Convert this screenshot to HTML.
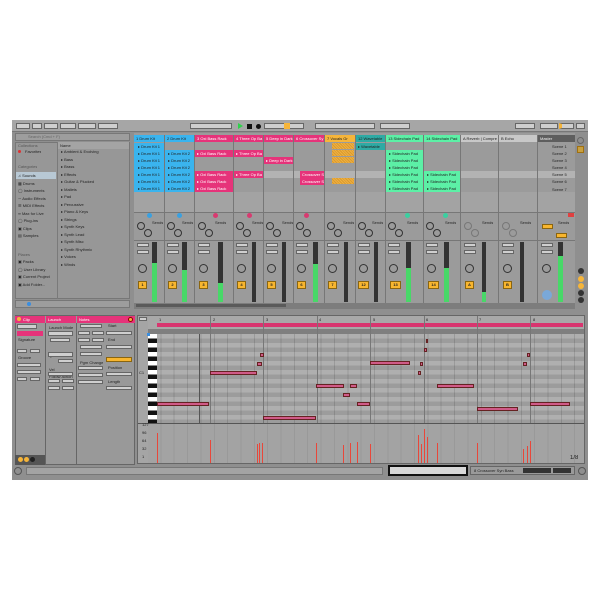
<!DOCTYPE html><html><head><meta charset="utf-8"><style>
*{margin:0;padding:0;box-sizing:border-box}
body{width:600px;height:600px;background:#fff;position:relative;overflow:hidden;font-family:"Liberation Sans",sans-serif;font-size:4px;color:#222}
div{position:absolute}
.t{white-space:nowrap;overflow:hidden;line-height:7px;font-size:4px;padding-left:2px}
.blue{background:#3ab4ee}.pink{background:#e6337a;color:#fff}.org{background:#f6b53a}.teal{background:#2eaaa4}.grn{background:#5cf0a6}
.hat{background:repeating-linear-gradient(45deg,#f0b040 0 1px,#d89a30 1px 2px)}
.y{background:#f8b62f;border:1px solid #8a6510;font-size:4px;text-align:center;line-height:6px;font-weight:bold}
.box{background:#cfcfcf;border:1px solid #666}
.k{border:1px solid #333;border-radius:50%}
</style></head><body>
<!-- app frame -->
<div style="left:12px;top:120px;width:576px;height:360px;background:#8f8f8f"></div>
<!-- top bar -->
<div style="left:12px;top:120px;width:576px;height:12px;background:#a6a6a6;border-bottom:1px solid #777"></div>
<div class="box" style="left:16px;top:123px;width:14px;height:6px"></div>
<div class="box" style="left:32px;top:123px;width:10px;height:6px"></div>
<div class="box" style="left:44px;top:123px;width:14px;height:6px"></div>
<div class="box" style="left:60px;top:123px;width:16px;height:6px"></div>
<div class="box" style="left:78px;top:123px;width:18px;height:6px"></div>
<div class="box" style="left:98px;top:123px;width:20px;height:6px"></div>
<div class="box" style="left:190px;top:123px;width:42px;height:6px"></div>
<div style="left:238px;top:123px;width:0;height:0;border-left:5px solid #2fd24a;border-top:3px solid transparent;border-bottom:3px solid transparent"></div>
<div style="left:247px;top:124px;width:5px;height:5px;background:#111"></div>
<div style="left:256px;top:124px;width:5px;height:5px;background:#111;border-radius:50%"></div>
<div class="box" style="left:264px;top:123px;width:40px;height:6px"></div>
<div style="left:284px;top:123px;width:6px;height:6px;background:#f6b53a"></div>
<div class="box" style="left:315px;top:123px;width:60px;height:6px"></div>
<div class="box" style="left:380px;top:123px;width:30px;height:6px"></div>
<div class="box" style="left:515px;top:123px;width:20px;height:6px"></div>
<div class="box" style="left:540px;top:123px;width:18px;height:6px"></div>
<div style="left:559px;top:123px;width:15px;height:6px;background:#cfcfcf;border:1px solid #666;border-left:3px solid #f6b53a"></div>
<div class="box" style="left:576px;top:123px;width:9px;height:6px"></div>

<!-- browser -->
<div style="left:15px;top:133px;width:115px;height:8px;background:#9d9d9d;border:1px solid #777"></div>
<div class="t" style="left:26px;top:133px;color:#666">Search (Cmd + F)</div>
<div style="left:15px;top:142px;width:115px;height:157px;background:#979797;border:1px solid #777"></div>
<div style="left:57px;top:142px;width:1px;height:157px;background:#7a7a7a"></div>
<div class="t" style="left:16px;top:142px;color:#555">Collections</div>
<div class="t" style="left:58px;top:142px;width:71px;background:#a4a4a4">Name</div>
<div style="left:18px;top:150px;width:3px;height:3px;border-radius:50%;background:#e03030"></div>
<div class="t" style="left:23px;top:148px">Favorites</div>
<div class="t" style="left:16px;top:163px;color:#555">Categories</div>
<div style="left:16px;top:172px;width:40px;height:7px;background:#b8c8d4"></div>
<div class="t" style="left:16px;top:172px;line-height:7.5px">&#9835; Sounds<br>&#9638; Drums<br>&#9711; Instruments<br>&#8764; Audio Effects<br>&#9776; MIDI Effects<br>&#8734; Max for Live<br>&#9711; Plug-ins<br>&#9635; Clips<br>&#9636; Samples</div>
<div class="t" style="left:16px;top:251px;color:#555">Places</div>
<div class="t" style="left:16px;top:258px;line-height:7.5px">&#9635; Packs<br>&#9711; User Library<br>&#9635; Current Project<br>&#9635; Add Folder...</div>
<div class="t" style="left:59px;top:148px;line-height:7.5px">&#9656; Ambient &amp; Evolving<br>&#9656; Bass<br>&#9656; Brass<br>&#9656; Effects<br>&#9656; Guitar &amp; Plucked<br>&#9656; Mallets<br>&#9656; Pad<br>&#9656; Percussive<br>&#9656; Piano &amp; Keys<br>&#9656; Strings<br>&#9656; Synth Keys<br>&#9656; Synth Lead<br>&#9656; Synth Misc<br>&#9656; Synth Rhythmic<br>&#9656; Voices<br>&#9656; Winds</div>
<div style="left:15px;top:300px;width:115px;height:8px;background:#9d9d9d;border:1px solid #777"></div>
<div style="left:27px;top:302px;width:4px;height:4px;background:#3a8ee0;border-radius:50%"></div>

<!-- session area background -->
<div style="left:134px;top:133px;width:441px;height:170px;background:#9b9b9b"></div>
<div style="left:134px;top:192px;width:441px;height:20px;background:#a3a3a3"></div>
<div style="left:134px;top:171px;width:441px;height:7px;background:#b3b3b3"></div>
<div style="left:134px;top:303px;width:441px;height:6px;background:#7d7d7d"></div>
<div style="left:136px;top:304px;width:150px;height:3px;background:#5a5a5a"></div>
<!-- column separators -->
<div style="left:164px;top:135px;width:1px;height:168px;background:#777"></div>
<div style="left:194px;top:135px;width:1px;height:168px;background:#777"></div>
<div style="left:233px;top:135px;width:1px;height:168px;background:#777"></div>
<div style="left:263px;top:135px;width:1px;height:168px;background:#777"></div>
<div style="left:293px;top:135px;width:1px;height:168px;background:#777"></div>
<div style="left:324px;top:135px;width:1px;height:168px;background:#777"></div>
<div style="left:355px;top:135px;width:1px;height:168px;background:#777"></div>
<div style="left:385px;top:135px;width:1px;height:168px;background:#777"></div>
<div style="left:423px;top:135px;width:1px;height:168px;background:#777"></div>
<div style="left:460px;top:135px;width:1px;height:168px;background:#777"></div>
<div style="left:498px;top:135px;width:1px;height:168px;background:#777"></div>
<div style="left:537px;top:135px;width:1px;height:168px;background:#777"></div>
<div style="left:134px;top:212px;width:441px;height:1px;background:#777"></div>
<div style="left:134px;top:240px;width:441px;height:1px;background:#777"></div>

<!-- track headers -->
<div class="t blue" style="left:134px;top:135px;width:30px">1 Drum Kit</div>
<div class="t blue" style="left:165px;top:135px;width:29px">2 Drum Kit</div>
<div class="t pink" style="left:195px;top:135px;width:38px">3 Oxi Bass Rack</div>
<div class="t pink" style="left:234px;top:135px;width:29px">4 Three Op Ba</div>
<div class="t pink" style="left:264px;top:135px;width:29px">5 Deep in Dark</div>
<div class="t pink" style="left:294px;top:135px;width:30px">6 Crossover Sy</div>
<div class="t org" style="left:325px;top:135px;width:30px">7 Vocals Gr</div>
<div class="t teal" style="left:356px;top:135px;width:29px">12 Wavetable</div>
<div class="t grn" style="left:386px;top:135px;width:37px">13 Sidechain Pad</div>
<div class="t grn" style="left:424px;top:135px;width:36px">14 Sidechain Pad</div>
<div class="t" style="left:461px;top:135px;width:37px;background:#c8c8c8">A Reverb | Compre</div>
<div class="t" style="left:499px;top:135px;width:38px;background:#c8c8c8">B Echo</div>
<div class="t" style="left:538px;top:135px;width:37px;background:#5e5e5e;color:#eee">Master</div>

<!-- clips: rows at y 143 + n*7.1 -->
<!-- track 1 -->
<div class="blue" style="left:134px;top:143px;width:30px;height:49px"></div>
<div class="t" style="left:136px;top:143px;line-height:7px">&#9656; Drum Kit 1<br>&#9656; Drum Kit 1<br>&#9656; Drum Kit 1<br>&#9656; Drum Kit 1<br>&#9656; Drum Kit 1<br>&#9656; Drum Kit 1<br>&#9656; Drum Kit 1</div>
<div class="blue" style="left:165px;top:150px;width:29px;height:42px"></div>
<div class="t" style="left:166px;top:150px;line-height:7px">&#9656; Drum Kit 2<br>&#9656; Drum Kit 2<br>&#9656; Drum Kit 2<br>&#9656; Drum Kit 2<br>&#9656; Drum Kit 2<br>&#9656; Drum Kit 2</div>
<div class="t pink" style="left:195px;top:150px;width:38px;height:7px">&#9656; Oxi Bass Rack</div>
<div class="t pink" style="left:195px;top:171px;width:38px;height:7px">&#9656; Oxi Bass Rack</div>
<div class="t pink" style="left:195px;top:178px;width:38px;height:7px">&#9656; Oxi Bass Rack</div>
<div class="t pink" style="left:195px;top:185px;width:38px;height:7px">&#9656; Oxi Bass Rack</div>
<div class="t pink" style="left:234px;top:150px;width:29px;height:7px">&#9656; Three Op Ba</div>
<div class="t pink" style="left:234px;top:171px;width:29px;height:7px">&#9656; Three Op Ba</div>
<div class="t pink" style="left:264px;top:157px;width:29px;height:7px">&#9656; Deep in Dark</div>
<div class="t pink" style="left:300px;top:171px;width:24px;height:7px">Crossover S</div>
<div class="t pink" style="left:300px;top:178px;width:24px;height:7px">Crossover S</div>
<div class="hat" style="left:332px;top:143px;width:22px;height:6px"></div>
<div class="hat" style="left:332px;top:150px;width:22px;height:6px"></div>
<div class="hat" style="left:332px;top:157px;width:22px;height:6px"></div>
<div class="hat" style="left:332px;top:178px;width:22px;height:6px"></div>
<div class="t teal" style="left:356px;top:143px;width:29px;height:7px">&#9656; Wavetable</div>
<div class="grn" style="left:386px;top:150px;width:37px;height:42px"></div>
<div class="t" style="left:387px;top:150px;line-height:7px">&#9656; Sidechain Pad<br>&#9656; Sidechain Pad<br>&#9656; Sidechain Pad<br>&#9656; Sidechain Pad<br>&#9656; Sidechain Pad<br>&#9656; Sidechain Pad</div>
<div class="grn" style="left:424px;top:171px;width:36px;height:21px"></div>
<div class="t" style="left:425px;top:171px;line-height:7px">&#9656; Sidechain Pad<br>&#9656; Sidechain Pad<br>&#9656; Sidechain Pad</div>
<div class="t" style="left:540px;top:143px;line-height:7.1px;padding-left:12px">Scene 1<br>Scene 2<br>Scene 3<br>Scene 4<br>Scene 5<br>Scene 6<br>Scene 7</div>
<div style="left:577px;top:137px;width:7px;height:7px;border:1px solid #666;border-radius:50%"></div>
<div style="left:577px;top:146px;width:7px;height:7px;border:1px solid #a07010;background:#c8a040"></div>

<!-- mixer per track: status row, sends knobs, vol boxes, meters, knobs, yellow numbers -->
<!-- status dots -->
<div style="left:147px;top:213px;width:5px;height:5px;border-radius:50%;background:#3aa0e0"></div>
<div style="left:177px;top:213px;width:5px;height:5px;border-radius:50%;background:#3aa0e0"></div>
<div style="left:213px;top:213px;width:5px;height:5px;border-radius:50%;background:#d83a70"></div>
<div style="left:247px;top:213px;width:5px;height:5px;border-radius:50%;background:#d83a70"></div>
<div style="left:304px;top:213px;width:5px;height:5px;border-radius:50%;background:#d83a70"></div>
<div style="left:405px;top:213px;width:5px;height:5px;border-radius:50%;background:#3ad0a0"></div>
<div style="left:443px;top:213px;width:5px;height:5px;border-radius:50%;background:#3ad0a0"></div>
<div style="left:568px;top:213px;width:6px;height:4px;background:#e04040"></div>
<!-- send knobs -->
<div class="k" style="left:137px;top:222px;width:8px;height:8px"></div><div class="k" style="left:144px;top:229px;width:8px;height:8px"></div>
<div class="k" style="left:167px;top:222px;width:8px;height:8px"></div><div class="k" style="left:174px;top:229px;width:8px;height:8px"></div>
<div class="k" style="left:198px;top:222px;width:8px;height:8px"></div><div class="k" style="left:205px;top:229px;width:8px;height:8px"></div>
<div class="k" style="left:236px;top:222px;width:8px;height:8px"></div><div class="k" style="left:243px;top:229px;width:8px;height:8px"></div>
<div class="k" style="left:266px;top:222px;width:8px;height:8px"></div><div class="k" style="left:273px;top:229px;width:8px;height:8px"></div>
<div class="k" style="left:296px;top:222px;width:8px;height:8px"></div><div class="k" style="left:303px;top:229px;width:8px;height:8px"></div>
<div class="k" style="left:327px;top:222px;width:8px;height:8px"></div><div class="k" style="left:334px;top:229px;width:8px;height:8px"></div>
<div class="k" style="left:358px;top:222px;width:8px;height:8px"></div><div class="k" style="left:365px;top:229px;width:8px;height:8px"></div>
<div class="k" style="left:388px;top:222px;width:8px;height:8px"></div><div class="k" style="left:395px;top:229px;width:8px;height:8px"></div>
<div class="k" style="left:426px;top:222px;width:8px;height:8px"></div><div class="k" style="left:433px;top:229px;width:8px;height:8px"></div>
<div class="k" style="left:464px;top:222px;width:8px;height:8px;border-color:#777"></div><div class="k" style="left:471px;top:229px;width:8px;height:8px;border-color:#777"></div>
<div class="k" style="left:502px;top:222px;width:8px;height:8px;border-color:#777"></div><div class="k" style="left:509px;top:229px;width:8px;height:8px;border-color:#777"></div>
<div class="y" style="left:542px;top:224px;width:11px;height:5px"></div><div class="y" style="left:556px;top:233px;width:11px;height:5px"></div>
<div class="t" style="left:150px;top:219px">Sends</div><div class="t" style="left:180px;top:219px">Sends</div><div class="t" style="left:213px;top:219px">Sends</div><div class="t" style="left:250px;top:219px">Sends</div><div class="t" style="left:280px;top:219px">Sends</div><div class="t" style="left:341px;top:219px">Sends</div><div class="t" style="left:370px;top:219px">Sends</div><div class="t" style="left:405px;top:219px">Sends</div><div class="t" style="left:443px;top:219px">Sends</div><div class="t" style="left:480px;top:219px">Sends</div><div class="t" style="left:518px;top:219px">Sends</div><div class="t" style="left:556px;top:219px">Sends</div>
<!-- vol boxes -->
<div class="box" style="left:137px;top:243px;width:12px;height:4px"></div><div class="box" style="left:137px;top:250px;width:12px;height:4px"></div>
<div class="box" style="left:167px;top:243px;width:12px;height:4px"></div><div class="box" style="left:167px;top:250px;width:12px;height:4px"></div>
<div class="box" style="left:198px;top:243px;width:12px;height:4px"></div><div class="box" style="left:198px;top:250px;width:12px;height:4px"></div>
<div class="box" style="left:236px;top:243px;width:12px;height:4px"></div><div class="box" style="left:236px;top:250px;width:12px;height:4px"></div>
<div class="box" style="left:266px;top:243px;width:12px;height:4px"></div><div class="box" style="left:266px;top:250px;width:12px;height:4px"></div>
<div class="box" style="left:296px;top:243px;width:12px;height:4px"></div><div class="box" style="left:296px;top:250px;width:12px;height:4px"></div>
<div class="box" style="left:327px;top:243px;width:12px;height:4px"></div><div class="box" style="left:327px;top:250px;width:12px;height:4px"></div>
<div class="box" style="left:358px;top:243px;width:12px;height:4px"></div><div class="box" style="left:358px;top:250px;width:12px;height:4px"></div>
<div class="box" style="left:388px;top:243px;width:12px;height:4px"></div><div class="box" style="left:388px;top:250px;width:12px;height:4px"></div>
<div class="box" style="left:426px;top:243px;width:12px;height:4px"></div><div class="box" style="left:426px;top:250px;width:12px;height:4px"></div>
<div class="box" style="left:464px;top:243px;width:12px;height:4px"></div><div class="box" style="left:464px;top:250px;width:12px;height:4px"></div>
<div class="box" style="left:502px;top:243px;width:12px;height:4px"></div><div class="box" style="left:502px;top:250px;width:12px;height:4px"></div>
<div class="box" style="left:541px;top:243px;width:12px;height:4px"></div><div class="box" style="left:541px;top:250px;width:12px;height:4px"></div>
<!-- meters: dark channel + green fill -->
<div style="left:152px;top:242px;width:5px;height:60px;background:#333"></div><div style="left:152px;top:263px;width:5px;height:39px;background:#48d868"></div>
<div style="left:182px;top:242px;width:5px;height:60px;background:#333"></div><div style="left:182px;top:270px;width:5px;height:32px;background:#48d868"></div>
<div style="left:218px;top:242px;width:5px;height:60px;background:#333"></div><div style="left:218px;top:283px;width:5px;height:19px;background:#48d868"></div>
<div style="left:252px;top:242px;width:4px;height:60px;background:#333"></div>
<div style="left:282px;top:242px;width:4px;height:60px;background:#333"></div>
<div style="left:313px;top:242px;width:5px;height:60px;background:#333"></div><div style="left:313px;top:264px;width:5px;height:38px;background:#48d868"></div>
<div style="left:344px;top:242px;width:4px;height:60px;background:#333"></div>
<div style="left:374px;top:242px;width:4px;height:60px;background:#333"></div>
<div style="left:406px;top:242px;width:5px;height:60px;background:#333"></div><div style="left:406px;top:268px;width:5px;height:34px;background:#48d868"></div>
<div style="left:444px;top:242px;width:5px;height:60px;background:#333"></div><div style="left:444px;top:268px;width:5px;height:34px;background:#48d868"></div>
<div style="left:482px;top:242px;width:4px;height:60px;background:#333"></div><div style="left:482px;top:292px;width:4px;height:10px;background:#48d868"></div>
<div style="left:520px;top:242px;width:4px;height:60px;background:#333"></div>
<div style="left:558px;top:242px;width:5px;height:60px;background:#333"></div><div style="left:558px;top:256px;width:5px;height:46px;background:#48d868"></div>
<!-- pan knobs -->
<div class="k" style="left:138px;top:264px;width:9px;height:9px"></div>
<div class="k" style="left:168px;top:264px;width:9px;height:9px"></div>
<div class="k" style="left:199px;top:264px;width:9px;height:9px"></div>
<div class="k" style="left:237px;top:264px;width:9px;height:9px"></div>
<div class="k" style="left:267px;top:264px;width:9px;height:9px"></div>
<div class="k" style="left:297px;top:264px;width:9px;height:9px"></div>
<div class="k" style="left:328px;top:264px;width:9px;height:9px"></div>
<div class="k" style="left:359px;top:264px;width:9px;height:9px"></div>
<div class="k" style="left:389px;top:264px;width:9px;height:9px"></div>
<div class="k" style="left:427px;top:264px;width:9px;height:9px"></div>
<div class="k" style="left:465px;top:264px;width:9px;height:9px"></div>
<div class="k" style="left:503px;top:264px;width:9px;height:9px"></div>
<div class="k" style="left:542px;top:264px;width:9px;height:9px"></div>
<!-- yellow numbers -->
<div class="y" style="left:138px;top:281px;width:9px;height:8px">1</div>
<div class="y" style="left:168px;top:281px;width:9px;height:8px">2</div>
<div class="y" style="left:199px;top:281px;width:9px;height:8px">3</div>
<div class="y" style="left:237px;top:281px;width:9px;height:8px">4</div>
<div class="y" style="left:267px;top:281px;width:9px;height:8px">5</div>
<div class="y" style="left:297px;top:281px;width:9px;height:8px">6</div>
<div class="y" style="left:328px;top:281px;width:9px;height:8px">7</div>
<div class="y" style="left:358px;top:281px;width:11px;height:8px">12</div>
<div class="y" style="left:390px;top:281px;width:11px;height:8px">13</div>
<div class="y" style="left:428px;top:281px;width:11px;height:8px">14</div>
<div class="y" style="left:465px;top:281px;width:9px;height:8px">A</div>
<div class="y" style="left:503px;top:281px;width:9px;height:8px">B</div>
<div style="left:542px;top:290px;width:10px;height:10px;border-radius:50%;background:#7aa8d8"></div>
<!-- right side round buttons -->
<div style="left:578px;top:268px;width:6px;height:6px;border-radius:50%;background:#333"></div>
<div style="left:578px;top:276px;width:6px;height:6px;border-radius:50%;background:#f6b53a"></div>
<div style="left:578px;top:283px;width:6px;height:6px;border-radius:50%;background:#f6b53a"></div>
<div style="left:578px;top:290px;width:6px;height:6px;border-radius:50%;background:#333"></div>
<div style="left:578px;top:297px;width:6px;height:6px;border-radius:50%;background:#333"></div>

<!-- clip detail -->
<div style="left:15px;top:315px;width:120px;height:150px;background:#999;border:1px solid #666"></div>
<div class="t pink" style="left:15px;top:316px;width:30px;padding-left:8px">Clip</div>
<div style="left:17px;top:317px;width:4px;height:4px;border-radius:50%;background:#f6b53a"></div>
<div class="t pink" style="left:46px;top:316px;width:30px">Launch</div>
<div class="t pink" style="left:77px;top:316px;width:58px">Notes</div>
<div style="left:128px;top:317px;width:5px;height:5px;border-radius:50%;background:#f6b53a;border:1px solid #800"></div>
<div style="left:45px;top:323px;width:1px;height:142px;background:#666"></div>
<div style="left:76px;top:323px;width:1px;height:142px;background:#666"></div>
<div style="left:15px;top:455px;width:30px;height:10px;background:#555"></div>
<div style="left:18px;top:457px;width:5px;height:5px;border-radius:50%;background:#f6b53a"></div>
<div style="left:24px;top:457px;width:5px;height:5px;border-radius:50%;background:#f6b53a"></div>
<div style="left:30px;top:457px;width:5px;height:5px;border-radius:50%;background:#222"></div>
<div class="box" style="left:17px;top:324px;width:20px;height:5px"></div>
<div class="pink" style="left:17px;top:331px;width:26px;height:5px"></div>
<div class="t" style="left:16px;top:337px;line-height:6px">Signature<br><br><br>Groove<br><br><br><br></div>
<div class="box" style="left:17px;top:349px;width:10px;height:4px"></div><div class="box" style="left:30px;top:349px;width:10px;height:4px"></div>
<div class="box" style="left:17px;top:363px;width:24px;height:4px"></div>
<div class="box" style="left:17px;top:370px;width:24px;height:4px"></div>
<div class="box" style="left:17px;top:377px;width:10px;height:4px"></div><div class="box" style="left:30px;top:377px;width:10px;height:4px"></div>
<div class="t" style="left:47px;top:324px;line-height:7px">Launch Mode<br><br><br><br>Quantization<br><br>Vel<br>Follow Action</div>
<div class="box" style="left:48px;top:331px;width:25px;height:5px"></div>
<div class="box" style="left:50px;top:338px;width:20px;height:4px"></div>
<div class="box" style="left:48px;top:352px;width:25px;height:5px"></div>
<div class="box" style="left:58px;top:359px;width:15px;height:4px"></div>
<div class="box" style="left:48px;top:372px;width:25px;height:4px"></div>
<div class="box" style="left:48px;top:379px;width:12px;height:4px"></div><div class="box" style="left:62px;top:379px;width:12px;height:4px"></div>
<div class="box" style="left:48px;top:386px;width:12px;height:4px"></div><div class="box" style="left:62px;top:386px;width:12px;height:4px"></div>
<div class="box" style="left:80px;top:324px;width:22px;height:4px"></div>
<div class="box" style="left:78px;top:331px;width:12px;height:4px"></div><div class="box" style="left:92px;top:331px;width:12px;height:4px"></div>
<div class="box" style="left:78px;top:338px;width:12px;height:4px"></div><div class="box" style="left:92px;top:338px;width:12px;height:4px"></div>
<div class="box" style="left:80px;top:345px;width:22px;height:4px"></div>
<div class="box" style="left:80px;top:352px;width:22px;height:4px"></div>
<div class="t" style="left:78px;top:359px">Pgm Change</div>
<div class="box" style="left:78px;top:366px;width:25px;height:4px"></div>
<div class="box" style="left:78px;top:373px;width:25px;height:4px"></div>
<div class="box" style="left:78px;top:380px;width:25px;height:4px"></div>
<div class="t" style="left:106px;top:322px;line-height:7px">Start<br><br>End<br><br><br><br>Position<br><br>Length</div>
<div class="box" style="left:106px;top:331px;width:26px;height:4px"></div>
<div class="box" style="left:106px;top:345px;width:26px;height:4px"></div>
<div class="y" style="left:106px;top:357px;width:26px;height:5px"></div>
<div class="box" style="left:106px;top:372px;width:26px;height:4px"></div>
<div class="box" style="left:106px;top:386px;width:26px;height:4px"></div>

<!-- piano roll -->
<div style="left:137px;top:315px;width:448px;height:149px;background:#a5a5a5;border:1px solid #666"></div>
<div class="box" style="left:139px;top:317px;width:8px;height:4px"></div>
<div style="left:148px;top:316px;width:436px;height:13px;background:#a8a8a8"></div>
<div style="left:148px;top:329px;width:436px;height:5px;background:#7f7f7f"></div>
<div style="left:157px;top:323px;width:426px;height:4px;background:#d8356f"></div>
<div class="t" style="left:157px;top:316px">1</div><div class="t" style="left:211px;top:316px">2</div><div class="t" style="left:264px;top:316px">3</div><div class="t" style="left:317px;top:316px">4</div><div class="t" style="left:371px;top:316px">5</div><div class="t" style="left:424px;top:316px">6</div><div class="t" style="left:477px;top:316px">7</div><div class="t" style="left:531px;top:316px">8</div>
<!-- note rows -->
<div style="left:148px;top:334px;width:436px;height:89px;background:repeating-linear-gradient(to bottom,#afafaf 0 4.5px,#9c9c9c 4.5px 9px)"></div>
<div style="left:148px;top:334px;width:436px;height:89px;background:repeating-linear-gradient(to right,transparent 0 12.35px,rgba(0,0,0,.12) 12.35px 13.35px)"></div>
<div style="left:199px;top:334px;width:1px;height:129px;background:#555"></div>
<div style="left:210px;top:316px;width:1px;height:147px;background:#777"></div><div style="left:263px;top:316px;width:1px;height:147px;background:#777"></div><div style="left:317px;top:316px;width:1px;height:147px;background:#777"></div><div style="left:370px;top:316px;width:1px;height:147px;background:#777"></div><div style="left:424px;top:316px;width:1px;height:147px;background:#777"></div><div style="left:477px;top:316px;width:1px;height:147px;background:#777"></div><div style="left:530px;top:316px;width:1px;height:147px;background:#777"></div>
<!-- keys -->
<div style="left:148px;top:334px;width:9px;height:89px;background:repeating-linear-gradient(to bottom,#fff 0 4.5px,#111 4.5px 9px)"></div>
<div style="left:147px;top:333px;width:3px;height:3px;background:#3a8ee0"></div>
<div class="t" style="left:137px;top:369px">C1</div>
<!-- notes -->
<div style="left:157px;top:402px;width:52px;height:4px;background:#d05a88;border:1px solid #622"></div>
<div style="left:210px;top:371px;width:47px;height:4px;background:#d05a88;border:1px solid #622"></div>
<div style="left:257px;top:362px;width:5px;height:4px;background:#d05a88;border:1px solid #622"></div>
<div style="left:260px;top:353px;width:4px;height:4px;background:#d05a88;border:1px solid #622"></div>
<div style="left:263px;top:416px;width:53px;height:4px;background:#d05a88;border:1px solid #622"></div>
<div style="left:316px;top:384px;width:28px;height:4px;background:#d05a88;border:1px solid #622"></div>
<div style="left:350px;top:384px;width:7px;height:4px;background:#d05a88;border:1px solid #622"></div>
<div style="left:343px;top:393px;width:7px;height:4px;background:#d05a88;border:1px solid #622"></div>
<div style="left:357px;top:402px;width:13px;height:4px;background:#d05a88;border:1px solid #622"></div>
<div style="left:370px;top:361px;width:40px;height:4px;background:#d05a88;border:1px solid #622"></div>
<div style="left:418px;top:371px;width:3px;height:4px;background:#d05a88;border:1px solid #622"></div>
<div style="left:420px;top:362px;width:3px;height:4px;background:#d05a88;border:1px solid #622"></div>
<div style="left:424px;top:348px;width:3px;height:4px;background:#d05a88;border:1px solid #622"></div>
<div style="left:426px;top:339px;width:2px;height:4px;background:#622"></div>
<div style="left:437px;top:384px;width:37px;height:4px;background:#d05a88;border:1px solid #622"></div>
<div style="left:477px;top:407px;width:41px;height:4px;background:#d05a88;border:1px solid #622"></div>
<div style="left:523px;top:362px;width:4px;height:4px;background:#d05a88;border:1px solid #622"></div>
<div style="left:527px;top:353px;width:3px;height:4px;background:#d05a88;border:1px solid #622"></div>
<div style="left:530px;top:402px;width:40px;height:4px;background:#d05a88;border:1px solid #622"></div>
<!-- velocity lane -->
<div style="left:138px;top:423px;width:446px;height:1px;background:#555"></div>
<div style="left:148px;top:424px;width:436px;height:39px;background:repeating-linear-gradient(to right,#a3a3a3 0 12.35px,#999 12.35px 13.35px)"></div>
<div class="t" style="left:140px;top:421px;line-height:8px;font-size:4px">127<br>96<br>64<br>32<br>1</div>
<div style="left:157px;top:433px;width:1px;height:30px;background:#e8473a"></div>
<div style="left:210px;top:440px;width:1px;height:23px;background:#e8473a"></div>
<div style="left:257px;top:444px;width:1px;height:19px;background:#e8473a"></div>
<div style="left:259px;top:443px;width:1px;height:20px;background:#e8473a"></div>
<div style="left:262px;top:443px;width:1px;height:20px;background:#e8473a"></div>
<div style="left:316px;top:443px;width:1px;height:20px;background:#e8473a"></div>
<div style="left:343px;top:445px;width:1px;height:18px;background:#e8473a"></div>
<div style="left:350px;top:443px;width:1px;height:20px;background:#e8473a"></div>
<div style="left:357px;top:442px;width:1px;height:21px;background:#e8473a"></div>
<div style="left:370px;top:444px;width:1px;height:19px;background:#e8473a"></div>
<div style="left:418px;top:435px;width:1px;height:28px;background:#e8473a"></div>
<div style="left:421px;top:444px;width:1px;height:19px;background:#e8473a"></div>
<div style="left:424px;top:429px;width:1px;height:34px;background:#e8473a"></div>
<div style="left:427px;top:437px;width:1px;height:26px;background:#e8473a"></div>
<div style="left:437px;top:443px;width:1px;height:20px;background:#e8473a"></div>
<div style="left:477px;top:443px;width:1px;height:20px;background:#e8473a"></div>
<div style="left:523px;top:449px;width:1px;height:14px;background:#e8473a"></div>
<div style="left:527px;top:446px;width:1px;height:17px;background:#e8473a"></div>
<div style="left:530px;top:441px;width:1px;height:22px;background:#e8473a"></div>
<div class="t" style="left:568px;top:455px;font-size:6px">1/8</div>

<!-- status bar -->
<div style="left:14px;top:467px;width:8px;height:8px;border:1px solid #555;border-radius:50%"></div>
<div style="left:26px;top:467px;width:357px;height:8px;background:#a3a3a3;border:1px solid #777"></div>
<div style="left:388px;top:465px;width:80px;height:11px;background:#d8d8d8;border:2px solid #111"></div>
<div style="left:470px;top:466px;width:105px;height:9px;background:#9a9a9a;border:1px solid #666"></div>
<div class="t" style="left:472px;top:467px">8 Crossover Syn Bass</div>
<div style="left:523px;top:468px;width:28px;height:5px;background:#333"></div>
<div style="left:553px;top:468px;width:18px;height:5px;background:#333"></div>
<div style="left:578px;top:467px;width:8px;height:8px;border:1px solid #555;border-radius:50%"></div>
</body></html>
